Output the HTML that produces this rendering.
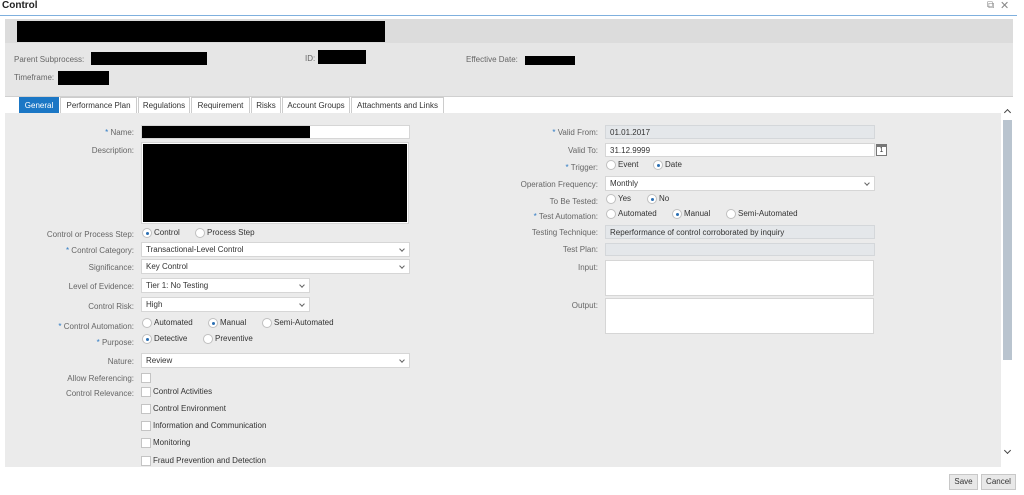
<!DOCTYPE html>
<html><head><style>
*{margin:0;padding:0;box-sizing:border-box}
body{width:1024px;height:495px;background:#fff;font-family:"Liberation Sans",Arial,sans-serif;position:relative;overflow:hidden;font-size:8px;color:#333}
.a{position:absolute}
.lb{position:absolute;color:#666;font-size:8px;text-align:right;white-space:nowrap}
.st{color:#2f7bc4}
.in{position:absolute;background:#fff;border:1px solid #d6d6d6;height:15px;font-size:8px;line-height:13px;padding-left:4px;color:#333}
.gr{background:#e4e7ea;border-color:#d4d7da}
.dd::after{content:"";position:absolute;right:5px;top:4px;width:3px;height:3px;border-right:1px solid #666;border-bottom:1px solid #666;transform:rotate(45deg)}
.blk{position:absolute;background:#000}
.r{position:absolute;width:10px;height:10px;border:1px solid #c0c0c0;border-radius:50%;background:#fff}
.r.on::after{content:"";position:absolute;left:3px;top:3px;width:3px;height:3px;border-radius:50%;background:#2a6fb3}
.t{position:absolute;font-size:8px;color:#333;white-space:nowrap;line-height:10px}
.c{position:absolute;width:10px;height:10px;border:1px solid #c4c4c4;background:#fff}
.tab{position:absolute;top:97px;height:16px;border:1px solid #ccc;border-bottom:none;background:#fff;font-size:8px;line-height:15px;text-align:center;color:#333}
.btn{position:absolute;top:474px;height:16px;border:1px solid #c8c8c8;background:#e8e8e8;font-size:8px;line-height:14px;text-align:center;color:#333}
</style></head><body>
<div class="a" style="left:2px;top:0;font-weight:bold;font-size:10px;color:#222">Control</div>
<div class="a" style="left:987px;top:0;font-size:10px;color:#888">⧉</div>
<div class="a" style="left:1000px;top:-1px;font-size:11px;color:#888">✕</div>
<div class="a" style="left:0;top:15px;width:1017px;height:1px;background:#7fb0de"></div>
<div class="a" style="left:5px;top:19px;width:1008px;height:24px;background:#dcdcdc"></div>
<div class="a" style="left:5px;top:43px;width:1008px;height:54px;background:#e6e6e6;border-bottom:1px solid #d0d0d0"></div>
<div class="blk" style="left:17px;top:21px;width:368px;height:21px"></div>
<div class="lb" style="left:14px;top:55px;text-align:left">Parent Subprocess:</div>
<div class="blk" style="left:91px;top:52px;width:116px;height:13px"></div>
<div class="lb" style="left:305px;top:54px;text-align:left">ID:</div>
<div class="blk" style="left:318px;top:50px;width:48px;height:14px"></div>
<div class="lb" style="left:466px;top:55px;text-align:left">Effective Date:</div>
<div class="blk" style="left:525px;top:56px;width:50px;height:9px"></div>
<div class="lb" style="left:14px;top:73px;text-align:left">Timeframe:</div>
<div class="blk" style="left:58px;top:71px;width:51px;height:14px"></div>
<div class="tab" style="left:19px;width:40px;background:#1b77c5;border-color:#1b77c5;color:#fff">General</div>
<div class="tab" style="left:60px;width:77px">Performance Plan</div>
<div class="tab" style="left:138px;width:52px">Regulations</div>
<div class="tab" style="left:191px;width:59px">Requirement</div>
<div class="tab" style="left:251px;width:30px">Risks</div>
<div class="tab" style="left:282px;width:68px">Account Groups</div>
<div class="tab" style="left:351px;width:93px">Attachments and Links</div>
<div class="a" style="left:5px;top:113px;width:996px;height:354px;background:#ebebeb"></div>
<div class="a" style="left:1003px;top:120px;width:9px;height:240px;background:#b9c4cf"></div>
<div class="a" style="left:1005px;top:110px;width:5px;height:5px;border-left:1.5px solid #444;border-top:1.5px solid #444;transform:rotate(45deg)"></div>
<div class="a" style="left:1005px;top:448px;width:5px;height:5px;border-right:1.5px solid #444;border-bottom:1.5px solid #444;transform:rotate(45deg)"></div>

<div class="lb" style="right:890px;top:128px"><span class="st">* </span>Name:</div>
<div class="in" style="left:141px;top:125px;width:269px;height:14px"></div>
<div class="blk" style="left:142px;top:126px;width:168px;height:12px"></div>
<div class="lb" style="right:890px;top:146px">Description:</div>
<div class="in" style="left:141px;top:142px;width:268px;height:82px;padding:1px"><div style="background:#000;width:100%;height:100%"></div></div>
<div class="lb" style="right:890px;top:230px">Control or Process Step:</div>
<div class="r on" style="left:142px;top:228px"></div><div class="t" style="left:154px;top:228px">Control</div>
<div class="r" style="left:195px;top:228px"></div><div class="t" style="left:207px;top:228px">Process Step</div>
<div class="lb" style="right:890px;top:246px"><span class="st">* </span>Control Category:</div>
<div class="in dd" style="left:141px;top:242px;width:269px">Transactional-Level Control</div>
<div class="lb" style="right:890px;top:263px">Significance:</div>
<div class="in dd" style="left:141px;top:259px;width:269px">Key Control</div>
<div class="lb" style="right:890px;top:282px">Level of Evidence:</div>
<div class="in dd" style="left:141px;top:278px;width:169px">Tier 1: No Testing</div>
<div class="lb" style="right:890px;top:302px">Control Risk:</div>
<div class="in dd" style="left:141px;top:297px;width:169px">High</div>
<div class="lb" style="right:890px;top:322px"><span class="st">* </span>Control Automation:</div>
<div class="r" style="left:142px;top:318px"></div><div class="t" style="left:154px;top:318px">Automated</div>
<div class="r on" style="left:208px;top:318px"></div><div class="t" style="left:220px;top:318px">Manual</div>
<div class="r" style="left:262px;top:318px"></div><div class="t" style="left:274px;top:318px">Semi-Automated</div>
<div class="lb" style="right:890px;top:338px"><span class="st">* </span>Purpose:</div>
<div class="r on" style="left:142px;top:334px"></div><div class="t" style="left:154px;top:334px">Detective</div>
<div class="r" style="left:203px;top:334px"></div><div class="t" style="left:215px;top:334px">Preventive</div>
<div class="lb" style="right:890px;top:357px">Nature:</div>
<div class="in dd" style="left:141px;top:353px;width:269px">Review</div>
<div class="lb" style="right:890px;top:374px">Allow Referencing:</div>
<div class="c" style="left:141px;top:373px"></div>
<div class="lb" style="right:890px;top:389px">Control Relevance:</div>
<div class="c" style="left:141px;top:387px"></div><div class="t" style="left:153px;top:387px">Control Activities</div>
<div class="c" style="left:141px;top:404px"></div><div class="t" style="left:153px;top:404px">Control Environment</div>
<div class="c" style="left:141px;top:421px"></div><div class="t" style="left:153px;top:421px">Information and Communication</div>
<div class="c" style="left:141px;top:438px"></div><div class="t" style="left:153px;top:438px">Monitoring</div>
<div class="c" style="left:141px;top:456px"></div><div class="t" style="left:153px;top:456px">Fraud Prevention and Detection</div>

<div class="lb" style="right:426px;top:128px"><span class="st">* </span>Valid From:</div>
<div class="in gr" style="left:605px;top:125px;width:270px;height:14px">01.01.2017</div>
<div class="lb" style="right:426px;top:146px">Valid To:</div>
<div class="in" style="left:605px;top:143px;width:270px;height:14px">31.12.9999</div>
<div class="a" style="left:876px;top:144px;width:11px;height:12px;border:1px solid #777;border-top:3px solid #777;background:#fff;font-size:7px;line-height:7px;text-align:center">1</div>
<div class="lb" style="right:426px;top:163px"><span class="st">* </span>Trigger:</div>
<div class="r" style="left:606px;top:160px"></div><div class="t" style="left:618px;top:160px">Event</div>
<div class="r on" style="left:653px;top:160px"></div><div class="t" style="left:665px;top:160px">Date</div>
<div class="lb" style="right:426px;top:180px">Operation Frequency:</div>
<div class="in dd" style="left:605px;top:176px;width:270px">Monthly</div>
<div class="lb" style="right:426px;top:197px">To Be Tested:</div>
<div class="r" style="left:606px;top:194px"></div><div class="t" style="left:618px;top:194px">Yes</div>
<div class="r on" style="left:647px;top:194px"></div><div class="t" style="left:659px;top:194px">No</div>
<div class="lb" style="right:426px;top:212px"><span class="st">* </span>Test Automation:</div>
<div class="r" style="left:606px;top:209px"></div><div class="t" style="left:618px;top:209px">Automated</div>
<div class="r on" style="left:672px;top:209px"></div><div class="t" style="left:684px;top:209px">Manual</div>
<div class="r" style="left:726px;top:209px"></div><div class="t" style="left:738px;top:209px">Semi-Automated</div>
<div class="lb" style="right:426px;top:228px">Testing Technique:</div>
<div class="in gr" style="left:605px;top:225px;width:270px;height:14px">Reperformance of control corroborated by inquiry</div>
<div class="lb" style="right:426px;top:245px">Test Plan:</div>
<div class="in gr" style="left:605px;top:243px;width:270px;height:13px"></div>
<div class="lb" style="right:426px;top:263px">Input:</div>
<div class="in" style="left:605px;top:260px;width:269px;height:36px"></div>
<div class="lb" style="right:426px;top:301px">Output:</div>
<div class="in" style="left:605px;top:298px;width:269px;height:36px"></div>

<div class="btn" style="left:949px;width:29px">Save</div>
<div class="btn" style="left:981px;width:35px">Cancel</div>
</body></html>
